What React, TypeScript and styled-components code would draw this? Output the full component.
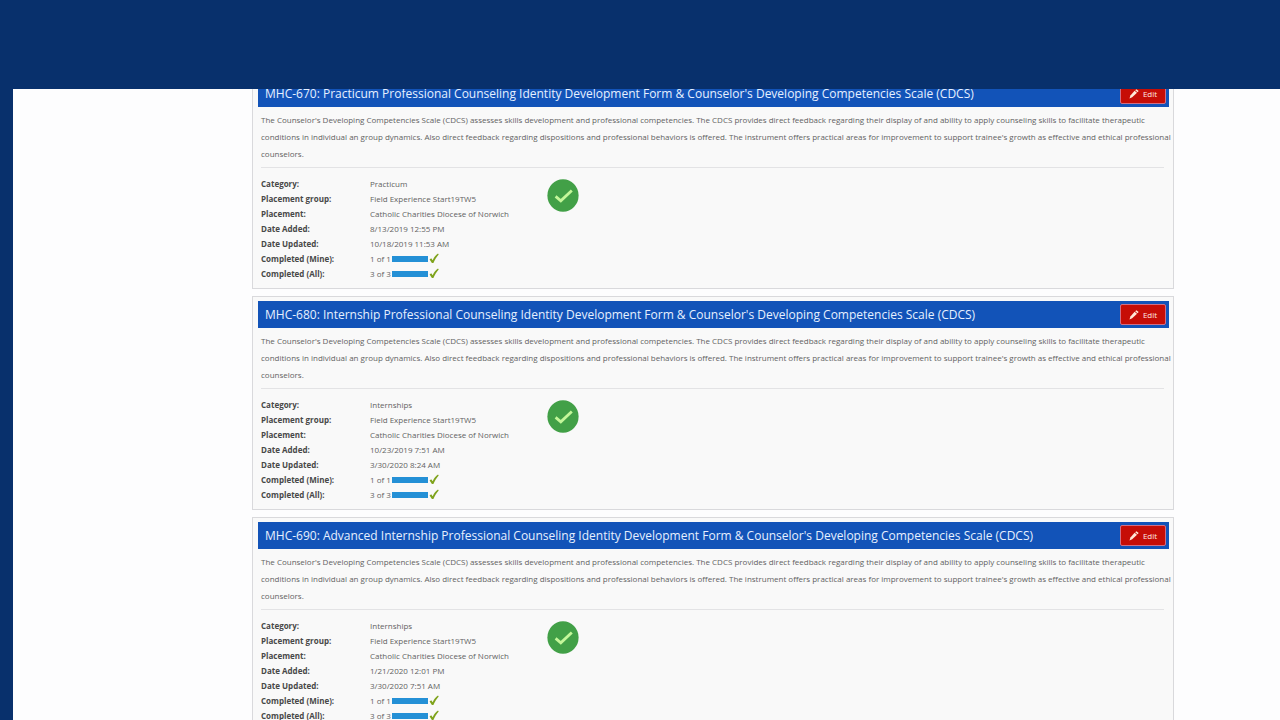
import React from "react";
import styled, { createGlobalStyle } from "styled-components";

const GlobalStyle = createGlobalStyle`
  * { box-sizing: border-box; }
  body {
    margin: 0;
    background: #08306c;
    font-family: "Open Sans", "Noto Sans", sans-serif;
    color: #626262;
  }
`;

const Shell = styled.div`
  display: flex;
  flex-direction: column;
  height: 100vh;
  padding-left: 13px;
  background: #08306c;
`;

const TopBand = styled.header`
  flex: none;
  height: 89px;
`;

const Viewport = styled.main`
  flex: 1;
  min-height: 0;
  overflow-y: auto;
  scrollbar-width: none;
  padding: 0 106px 0 239px;
  background: #fdfdfe;
`;

const CardList = styled.div`
  display: flex;
  flex-direction: column;
  gap: 7px;
  margin-top: -14px;
`;

const Card = styled.article`
  padding: 4px 0 7px 5px;
  border: 1px solid #d9d9dc;
  background: #f9f9f9;
`;

const CardHeader = styled.div`
  display: flex;
  align-items: center;
  justify-content: space-between;
  height: 27px;
  margin-right: 4px;
  padding: 0 3px 0 7px;
  background: #1253b8;
`;

const Title = styled.h2`
  margin: 0;
  font-size: 12px;
  line-height: 18px;
  font-weight: 400;
  white-space: nowrap;
  color: #e6f0ff;
`;

const EditButton = styled.button`
  display: flex;
  align-items: center;
  justify-content: center;
  gap: 4px;
  width: 46px;
  height: 21px;
  padding: 0;
  border: 1px solid #cf6f86;
  border-radius: 2px;
  background: #c60d06;
  color: #ffe9e2;
  font-family: inherit;
  font-size: 8px;
  line-height: 12px;
`;

const CardBody = styled.div`
  padding: 4px 0 0 3px;
`;

const Description = styled.p`
  margin: 0;
  font-size: 8px;
  line-height: 17px;
`;

const Divider = styled.hr`
  height: 1px;
  margin: 5px 9px 8px 0;
  border: 0;
  background: #e3e3e5;
`;

const Details = styled.div`
  display: flex;
  align-items: flex-start;
`;

const Facts = styled.dl`
  display: grid;
  grid-template-columns: 109px 177px;
  grid-auto-rows: 15px;
  margin: 0;
  font-size: 8px;
  line-height: 15px;
  white-space: nowrap;
`;

const Label = styled.dt`
  font-weight: 700;
  color: #484848;
`;

const Value = styled.dd`
  display: flex;
  align-items: center;
  margin: 0;
`;

const Count = styled.span`
  width: 22px;
`;

const Bar = styled.span`
  width: 36px;
  height: 6px;
  margin-right: 1px;
  background: #2490d6;
`;

const Badge = styled.svg`
  flex: none;
  margin-top: 3px;
`;

const PencilIcon = () => (
  <svg width="10" height="10" viewBox="0 0 10 10" aria-hidden="true">
    <path d="M0.5 9.5 L1.4 6.6 L5.6 1.8 L8 3.8 L3.2 8.2 Z" fill="#ffe9d8" />
    <path d="M6.2 1.3 L7.4 0.3 L9.7 2 L8.5 3.3 Z" fill="#ffe9d8" />
  </svg>
);

const TickIcon = () => (
  <svg width="10" height="11" viewBox="0 0 10 11" aria-hidden="true">
    <path
      d="M0.6 6.4 L2.2 5.2 L3.7 7.2 C5 4.4 6.8 2.2 9 0.6 L9.7 1.4 C7.4 3.8 5.8 6.6 4.4 10 L2.9 10 Z"
      fill="#7fa31c"
    />
  </svg>
);

const DoneBadge = () => (
  <Badge width="32" height="33" viewBox="0 0 32 33" role="img" aria-label="Complete">
    <ellipse cx="16" cy="16.5" rx="15.6" ry="16.2" fill="#42a047" />
    <path
      d="M8.6 17.4 L13.8 21.8 L24.8 11.4"
      fill="none"
      stroke="#c4f79a"
      strokeWidth="2.8"
    />
  </Badge>
);

const description =
  "The Counselor's Developing Competencies Scale (CDCS) assesses skills development and professional competencies. The CDCS provides direct feedback regarding their display of and ability to apply counseling skills to facilitate therapeutic conditions in individual an group dynamics. Also direct feedback regarding dispositions and professional behaviors is offered. The instrument offers practical areas for improvement to support trainee's growth as effective and ethical professional counselors.";

const suffix =
  "Professional Counseling Identity Development Form & Counselor's Developing Competencies Scale (CDCS)";

const forms = [
  {
    title: `MHC-670: Practicum ${suffix}`,
    category: "Practicum",
    added: "8/13/2019 12:55 PM",
    updated: "10/18/2019 11:53 AM",
  },
  {
    title: `MHC-680: Internship ${suffix}`,
    category: "Internships",
    added: "10/23/2019 7:51 AM",
    updated: "3/30/2020 8:24 AM",
  },
  {
    title: `MHC-690: Advanced Internship ${suffix}`,
    category: "Internships",
    added: "1/21/2020 12:01 PM",
    updated: "3/30/2020 7:51 AM",
  },
];

const Progress = ({ count }: { count: string }) => (
  <Value>
    <Count>{count}</Count>
    <Bar />
    <TickIcon />
  </Value>
);

export default function App() {
  return (
    <>
      <GlobalStyle />
      <Shell>
        <TopBand />
        <Viewport>
          <CardList>
            {forms.map((form) => (
              <Card key={form.title}>
                <CardHeader>
                  <Title>{form.title}</Title>
                  <EditButton type="button">
                    <PencilIcon />
                    Edit
                  </EditButton>
                </CardHeader>
                <CardBody>
                  <Description>{description}</Description>
                  <Divider />
                  <Details>
                    <Facts>
                      <Label>Category:</Label>
                      <Value>{form.category}</Value>
                      <Label>Placement group:</Label>
                      <Value>Field Experience Start19TW5</Value>
                      <Label>Placement:</Label>
                      <Value>Catholic Charities Diocese of Norwich</Value>
                      <Label>Date Added:</Label>
                      <Value>{form.added}</Value>
                      <Label>Date Updated:</Label>
                      <Value>{form.updated}</Value>
                      <Label>Completed (Mine):</Label>
                      <Progress count="1 of 1" />
                      <Label>Completed (All):</Label>
                      <Progress count="3 of 3" />
                    </Facts>
                    <DoneBadge />
                  </Details>
                </CardBody>
              </Card>
            ))}
          </CardList>
        </Viewport>
      </Shell>
    </>
  );
}
